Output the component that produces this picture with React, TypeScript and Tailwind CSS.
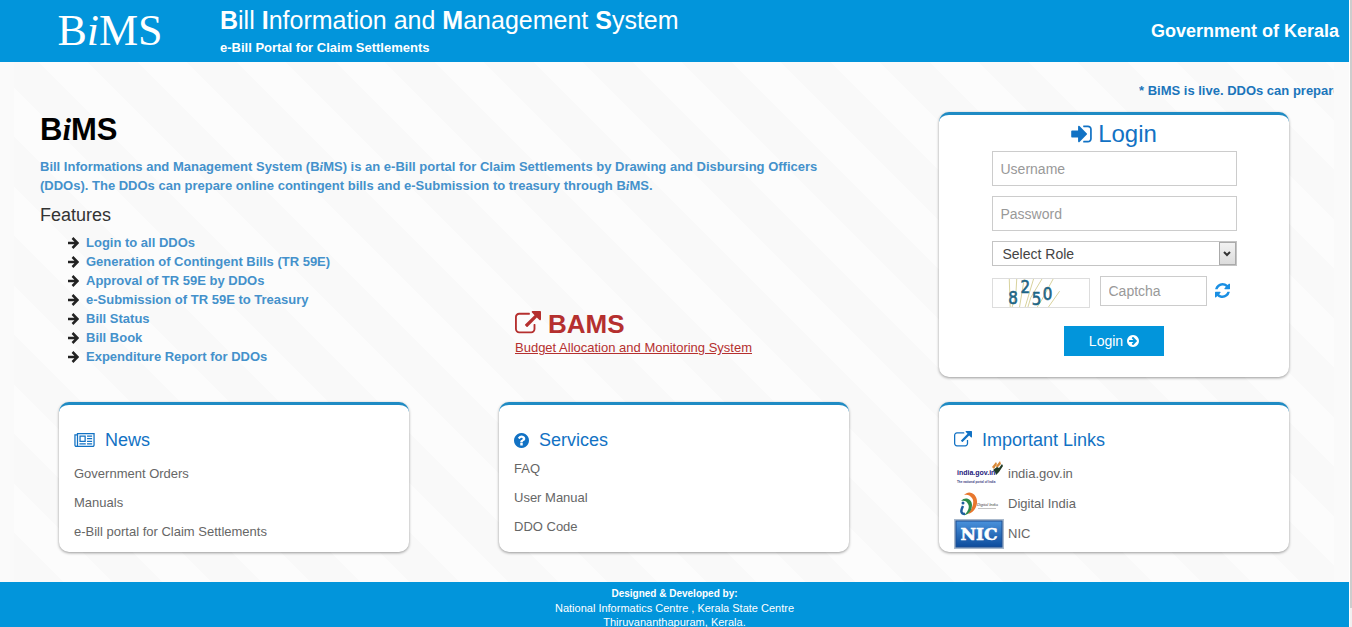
import { useState } from "react";
import type { ReactNode } from "react";

const iconPaths = {
  signIn: {
    viewBox: "128 0 1536 1792",
    d: "M1312 896q0 26-19 45l-544 544q-19 19-45 19t-45-19-19-45v-288h-448q-26 0-45-19t-19-45v-384q0-26 19-45t45-19h448v-288q0-26 19-45t45-19 45 19l544 544q19 19 19 45zm352-352v704q0 119-84.5 203.5t-203.5 84.5h-320q-13 0-22.5-9.5t-9.5-22.5q0-4-1-20t-.5-26.5 3-23.5 10-19.5 20.5-6.5h320q66 0 113-47t47-113v-704q0-66-47-113t-113-47h-312l-11.5-1-11.5-3-8-5.5-7-9-2-13.5q0-4-1-20t-.5-26.5 3-23.5 10-19.5 20.5-6.5h320q119 0 203.5 84.5t84.5 203.5z",
  },
  externalLink: {
    viewBox: "0 0 1792 1792",
    d: "M1408 928v320q0 119-84.5 203.5t-203.5 84.5h-832q-119 0-203.5-84.5t-84.5-203.5v-832q0-119 84.5-203.5t203.5-84.5h704q14 0 23 9t9 23v64q0 14-9 23t-23 9h-704q-66 0-113 47t-47 113v832q0 66 47 113t113 47h832q66 0 113-47t47-113v-320q0-14 9-23t23-9h64q14 0 23 9t9 23zm384-864v512q0 26-19 45t-45 19-45-19l-176-176-652 652q-10 10-23 10t-23-10l-114-114q-10-10-10-23t10-23l652-652-176-176q-19-19-19-45t19-45 45-19h512q26 0 45 19t19 45z",
  },
  refresh: {
    viewBox: "128 128 1536 1536",
    d: "M1639 1056q0 5-1 7-64 268-268 434.5t-478 166.5q-146 0-282.5-55t-243.5-157l-129 129q-19 19-45 19t-45-19-19-45v-448q0-26 19-45t45-19h448q26 0 45 19t19 45-19 45l-137 137q71 66 161 102t187 36q134 0 250-65t186-179q11-17 53-117 8-23 30-23h192q13 0 22.5 9.5t9.5 22.5zm25-800v448q0 26-19 45t-45 19h-448q-26 0-45-19t-19-45 19-45l138-138q-148-137-349-137-134 0-250 65t-186 179q-11 17-53 117-8 23-30 23h-199q-13 0-22.5-9.5t-9.5-22.5v-7q65-268 270-434.5t480-166.5q146 0 284 55.5t245 156.5l130-129q19-19 45-19t45 19 19 45z",
  },
  newspaper: {
    viewBox: "0 128 2048 1408",
    d: "M1024 512h-384v384h384v-384zm128 640v128h-640v-128h640zm0-768v640h-640v-640h640zm640 768v128h-512v-128h512zm0-256v128h-512v-128h512zm0-256v128h-512v-128h512zm0-256v128h-512v-128h512zm-1536 960v-960h-128v960q0 26 19 45t45 19 45-19 19-45zm1664 0v-1088h-1536v1088q0 33-11 64h1483q26 0 45-19t19-45zm128-1216v1216q0 80-56 136t-136 56h-1664q-80 0-136-56t-56-136v-1088h256v-128h1792z",
  },
  question: {
    viewBox: "128 128 1536 1536",
    d: "M1024 1376v-192q0-14-9-23t-23-9h-192q-14 0-23 9t-9 23v192q0 14 9 23t23 9h192q14 0 23-9t9-23zm256-672q0-88-55.5-163t-138.5-116-170-41q-243 0-371 213-15 24 8 42l132 100q7 6 19 6 16 0 25-12 53-68 86-92 34-24 86-24 48 0 85.5 26t37.5 59q0 38-20 61t-68 45q-63 28-115.5 86.5t-52.5 125.5v36q0 14 9 23t23 9h192q14 0 23-9t9-23q0-19 21.5-49.5t54.5-49.5q32-18 49-28.5t46-35 44.5-48 28-60.5 12.5-81zm384 192q0 209-103 385.5t-279.5 279.5-385.5 103-385.5-103-279.5-279.5-103-385.5 103-385.5 279.5-279.5 385.5-103 385.5 103 279.5 279.5 103 385.5z",
  },
  arrowCircle: {
    viewBox: "128 128 1536 1536",
    d: "M1413 896q0-27-18-45l-91-91-362-362q-18-18-45-18t-45 18l-91 91q-18 18-18 45t18 45l189 189h-502q-26 0-45 19t-19 45v128q0 26 19 45t45 19h502l-189 189q-18 18-18 45t18 45l91 91q18 18 45 18t45-18l362-362 91-91q18-18 18-45zm251 0q0 209-103 385.5t-279.5 279.5-385.5 103-385.5-103-279.5-279.5-103-385.5 103-385.5 279.5-279.5 385.5-103 385.5 103 279.5 279.5 103 385.5z",
  },
};

const Icon = ({ name, className }: { name: keyof typeof iconPaths; className: string }) => (
  <svg viewBox={iconPaths[name].viewBox} className={`shrink-0 ${className}`} fill="currentColor" aria-hidden="true">
    <path d={iconPaths[name].d} />
  </svg>
);

const SerifI = () => <i className="font-['Liberation_Serif',serif]">i</i>;

const features = [
  "Login to all DDOs",
  "Generation of Contingent Bills (TR 59E)",
  "Approval of TR 59E by DDOs",
  "e-Submission of TR 59E to Treasury",
  "Bill Status",
  "Bill Book",
  "Expenditure Report for DDOs",
];

const newsLinks = ["Government Orders", "Manuals", "e-Bill portal for Claim Settlements"];
const serviceLinks = ["FAQ", "User Manual", "DDO Code"];

const IndiaGovLogo = () => (
  <svg viewBox="0 0 50 30" className="h-[30px] w-[50px]" aria-hidden="true">
    <text x="3" y="16" fontSize="7" fontWeight="bold" fill="#23207c" fontFamily="'Liberation Sans', sans-serif">
      india.gov.in
    </text>
    <text x="3" y="24" fontSize="3" fontWeight="bold" fill="#3a3880" fontFamily="'Liberation Sans', sans-serif">
      The national portal of India
    </text>
    <path d="M38 8l4-5 1 2-3 5zM42 7l4-5 1 3-4 4z" fill="#d98a3a" />
    <path d="M39 11l4-3 2 1 3-4 1 2-4 6-3 3-1-3z" fill="#1f3a26" />
  </svg>
);

const DigitalIndiaLogo = () => (
  <svg viewBox="0 0 50 30" className="h-[30px] w-[50px]" fill="none" aria-hidden="true">
    <path d="M10 6C15 0 24 5 23 14c-1 7-5 10-9 11 4-5 7-12 4-16-2-3-5-4-8-3z" fill="#e8772e" />
    <path d="M7 12c4-5 11-2 11 4 0 6-4 10-8 10 4-3 6-8 4-11-1-3-4-4-7-3z" fill="#2c8a4b" />
    <circle cx="9" cy="14" r="1.5" fill="#1f5f9e" />
    <path d="M9 17c-2 4-3 8 2 8" stroke="#1f5f9e" strokeWidth="2.5" />
    <text x="23" y="17" fontSize="4" fontStyle="italic" fill="#444" fontFamily="'Liberation Sans', sans-serif">
      Digital India
    </text>
    <path d="M24 19.500h18" stroke="#b5b5b5" strokeWidth=".8" />
  </svg>
);

const NicLogo = () => (
  <svg viewBox="0 0 50 30" className="h-[30px] w-[50px]" aria-hidden="true">
    <defs>
      <linearGradient id="nic" x1="0" y1="0" x2="0" y2="1">
        <stop offset="0" stopColor="#4a92dc" />
        <stop offset="1" stopColor="#0d4c9c" />
      </linearGradient>
    </defs>
    <rect width="50" height="30" fill="#a9b9cc" />
    <rect x="2" y="2" width="46" height="26" fill="url(#nic)" stroke="#1d4f93" />
    <text x="25" y="21" textAnchor="middle" fontSize="17" fontWeight="bold" fill="#fff" stroke="#fff" strokeWidth=".6" fontFamily="'DejaVu Serif', serif">
      NIC
    </text>
  </svg>
);

const importantLinks = [
  { label: "india.gov.in", logo: <IndiaGovLogo /> },
  { label: "Digital India", logo: <DigitalIndiaLogo /> },
  { label: "NIC", logo: <NicLogo /> },
];

const CaptchaImage = () => (
  <svg viewBox="0 0 98 30" className="mt-[2px] h-[30px] w-[98px] border border-[#ddd] bg-white" role="img" aria-label="Captcha code">
    <path
      d="M15 0l1 30M23 0l-1 18-4 12M31 0l-5 30M41 0l-9 30M50 0L38 20l-3 10M62 0L50 22l-5 8M69 13L57 30"
      stroke="#d5cf96"
      fill="none"
    />
    <g fill="#1d6585" stroke="#1d6585" strokeWidth=".6" fontSize="18" fontFamily="'DejaVu Sans Condensed', 'Liberation Sans', sans-serif">
      <text x="14" y="27">8</text>
      <text x="27" y="15">2</text>
      <text x="39" y="28">5</text>
      <text x="51" y="22">0</text>
    </g>
  </svg>
);

const Card = ({ className = "", children }: { className?: string; children: ReactNode }) => (
  <section
    className={`mx-auto w-[350px] rounded-[10px] border-t-[3px] border-[#1f8bc4] bg-white shadow-[0_1px_3px_rgba(0,0,0,0.4)] ${className}`}
  >
    {children}
  </section>
);

const CardTitle = ({ icon, children }: { icon: ReactNode; children: ReactNode }) => (
  <h3 className="flex items-center gap-[10px] text-lg leading-5 text-[#1272c4]">
    {icon}
    {children}
  </h3>
);

const LoginForm = () => {
  const [form, setForm] = useState({ username: "", password: "", role: "", captcha: "" });

  const handleChange = (e: React.ChangeEvent<HTMLInputElement | HTMLSelectElement>) => {
    const { name, value } = e.target;
    setForm(prev => ({ ...prev, [name]: value }));
  };

  return (
    <form onSubmit={e => e.preventDefault()} className="mx-auto flex w-[245px] flex-col gap-[10px] text-sm">
      <input
        type="text"
        name="username"
        aria-label="Username"
        placeholder="Username"
        value={form.username}
        onChange={handleChange}
        className="h-[35px] border border-[#ccc] bg-white px-2 placeholder:text-[#999]"
      />
      <input
        type="password"
        name="password"
        aria-label="Password"
        placeholder="Password"
        value={form.password}
        onChange={handleChange}
        className="h-[35px] border border-[#ccc] bg-white px-2 placeholder:text-[#999]"
      />
      <div className="grid">
        <select
          name="role"
          aria-label="Select Role"
          value={form.role}
          onChange={handleChange}
          className="col-start-1 row-start-1 h-[25px] appearance-none border border-[#c4c4c4] bg-white px-[10px] text-[#444]"
        >
          <option value="">Select Role</option>
          <option value="ddo">DDO</option>
          <option value="treasury">Treasury</option>
        </select>
        <span className="pointer-events-none col-start-1 row-start-1 m-px flex w-[17px] items-center justify-center justify-self-end border border-[#aaa] bg-gradient-to-b from-[#f2f2f2] to-[#dcdcdc]">
          <svg viewBox="0 0 8 6" className="h-[6px] w-2" fill="none" stroke="#333" strokeWidth="2" aria-hidden="true">
            <path d="M1 1l3 3 3-3" />
          </svg>
        </span>
      </div>
      <div className="flex items-start">
        <CaptchaImage />
        <input
          type="text"
          name="captcha"
          aria-label="Captcha"
          placeholder="Captcha"
          value={form.captcha}
          onChange={handleChange}
          className="ml-[10px] h-[30px] w-[107px] border border-[#ccc] bg-white px-2 placeholder:text-[#999]"
        />
        <button type="button" aria-label="Refresh captcha" className="mt-[7px] ml-2 text-[#1a8fe3]">
          <Icon name="refresh" className="h-[15px] w-[15px]" />
        </button>
      </div>
      <button
        type="submit"
        className="mx-auto mt-2 flex h-[30px] w-[100px] items-center justify-center gap-1 bg-[#0295db] text-white"
      >
        Login
        <Icon name="arrowCircle" className="h-3 w-3" />
      </button>
    </form>
  );
};

export default function App() {
  return (
    <div className="flex h-screen bg-white font-['Liberation_Sans',Arial,sans-serif] text-[13px] text-[#333]">
      <div className="flex-1 overflow-y-auto bg-[#fafafa] [scrollbar-width:none]">
        <header className="flex h-[62px] items-center bg-[#0295db] text-white">
          <div className="w-[220px] text-center font-['Liberation_Serif',serif] text-[44px] leading-[60px]">
            B<i>i</i>MS
          </div>
          <div className="flex-1 pt-1">
            <h1 className="text-[25px] leading-[30px]">
              <b>B</b>ill <b>I</b>nformation and <b>M</b>anagement <b>S</b>ystem
            </h1>
            <p className="font-bold leading-[26px]">e-Bill Portal for Claim Settlements</p>
          </div>
          <p className="pr-[10px] text-lg font-bold">Government of Kerala</p>
        </header>

        <main className="mr-[15px] ml-[14px] bg-[repeating-linear-gradient(45deg,#f9f9f9_0_35px,#fcfcfc_35px_70px)] pt-5 pb-[30px]">
          <p className="ml-auto w-[195px] overflow-hidden font-bold leading-[18px] whitespace-nowrap text-[#1b75bb]">
            * BiMS is live. DDOs can prepare online contingent bills
          </p>

          <div className="mt-3 grid grid-cols-3">
            <div className="col-span-2 pl-[26px]">
              <h2 className="text-[31px] font-bold leading-9 text-black">
                B<SerifI />MS
              </h2>
              <p className="mt-[9px] max-w-[800px] font-bold leading-[19px] text-[#4491cb]">
                Bill Informations and Management System (B<SerifI />MS) is an e-Bill portal for Claim Settlements by Drawing and
                Disbursing Officers (DDOs). The DDOs can prepare online contingent bills and e-Submission to treasury through B
                <SerifI />MS.
              </p>
              <h3 className="mt-[10px] text-lg leading-5">Features</h3>
              <div className="mt-2 flex">
                <ul className="flex-1 pl-7 font-bold leading-[19px] text-[#4491cb]">
                  {features.map(feature => (
                    <li key={feature} className="flex items-center gap-[7px]">
                      <svg viewBox="0 0 11 12" className="h-3 w-[11px]" fill="none" stroke="#222" strokeWidth="2.500" aria-hidden="true">
                        <path d="M0 6h9M4.500 1l5 5-5 5" />
                      </svg>
                      {feature}
                    </li>
                  ))}
                </ul>
                <a href="#bams" className="w-[379px] self-end pb-[9px] text-[#b5302f]">
                  <span className="flex items-center gap-[7px] text-[26px] font-bold leading-[30px]">
                    <Icon name="externalLink" className="h-[26px] w-[26px]" />
                    BAMS
                  </span>
                  <span className="block leading-[18px] underline">Budget Allocation and Monitoring System</span>
                </a>
              </div>
            </div>

            <Card className="h-[265px] self-start">
              <h2 className="mb-1 flex items-center justify-center gap-[6px] pt-[6px] text-2xl leading-[26px] text-[#1272c4]">
                <Icon name="signIn" className="h-6 w-[21px]" />
                Login
              </h2>
              <LoginForm />
            </Card>
          </div>

          <div className="mt-[25px] grid grid-cols-3 text-[#666]">
            <Card className="h-[150px] px-[15px] pt-[25px]">
              <CardTitle icon={<Icon name="newspaper" className="h-[14px] w-[21px]" />}>News</CardTitle>
              <ul className="mt-[9px] leading-[29px]">
                {newsLinks.map(link => (
                  <li key={link}>
                    <a href="#news">{link}</a>
                  </li>
                ))}
              </ul>
            </Card>
            <Card className="h-[150px] px-[15px] pt-[25px]">
              <CardTitle icon={<Icon name="question" className="h-[15px] w-[15px]" />}>Services</CardTitle>
              <ul className="mt-1 leading-[29px]">
                {serviceLinks.map(link => (
                  <li key={link}>
                    <a href="#services">{link}</a>
                  </li>
                ))}
              </ul>
            </Card>
            <Card className="h-[150px] px-[15px] pt-[25px]">
              <CardTitle icon={<Icon name="externalLink" className="h-[18px] w-[18px]" />}>Important Links</CardTitle>
              <ul className="mt-[9px] leading-[30px]">
                {importantLinks.map(({ label, logo }) => (
                  <li key={label}>
                    <a href="#links" className="flex items-center gap-1">
                      {logo}
                      {label}
                    </a>
                  </li>
                ))}
              </ul>
            </Card>
          </div>
        </main>

        <footer className="bg-[#0295db] pt-[5px] text-center text-[11px] leading-[14px] text-white">
          <p className="text-[10px] font-bold leading-[14px]">Designed &amp; Developed by:</p>
          <p>National Informatics Centre , Kerala State Centre</p>
          <p>Thiruvananthapuram, Kerala.</p>
        </footer>
      </div>
      <div className="ml-px w-[2px] bg-[#f0f0f0]" aria-hidden="true">
        <div className="h-[97%] bg-[#cdcdcd]"></div>
      </div>
    </div>
  );
}
